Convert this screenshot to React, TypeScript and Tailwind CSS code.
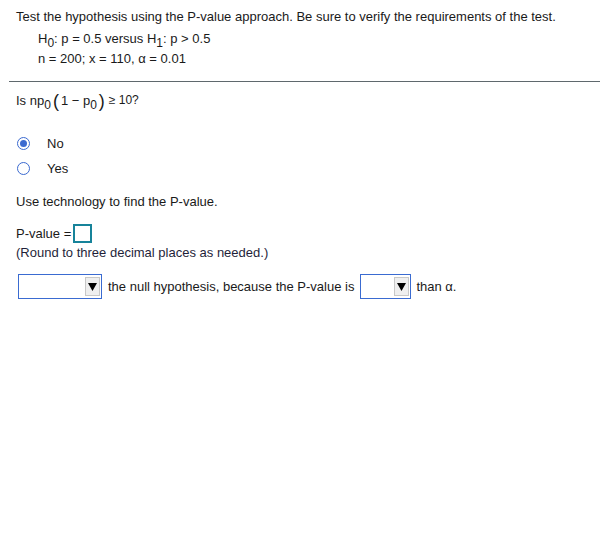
import React from 'react';

const Sub: React.FC<{ children: React.ReactNode }> = ({ children }) => (
  <span className="relative top-[4px] text-[12px] leading-none">{children}</span>
);

const Select: React.FC<{ width: string }> = ({ width }) => (
  <div className={`${width} h-[25px] border border-[#3a6bd1] bg-white flex items-center justify-end pr-[1px]`}>
    <div className="w-[15px] h-[19px] bg-[#efefef] border border-[#c8c8c8] flex items-center justify-center">
      <svg width="9" height="9" viewBox="0 0 9 9">
        <polygon points="0,1 9,1 4.5,9" fill="#000" />
      </svg>
    </div>
  </div>
);

const Radio: React.FC<{ checked?: boolean; label: string }> = ({ checked, label }) => (
  <div className="flex items-center h-[25px]">
    <div className="w-[13px] h-[13px] ml-[17px] rounded-full border border-[#3b6ad0] flex items-center justify-center bg-white">
      {checked && <div className="w-[7px] h-[7px] rounded-full bg-[#3b6ad0]" />}
    </div>
    <span className="ml-[17px]">{label}</span>
  </div>
);

export default function App() {
  return (
    <div
      className="w-[600px] h-[537px] bg-white text-[13px] text-[#1a1a1a] leading-none"
      style={{ fontFamily: '"Liberation Sans", Arial, sans-serif' }}
    >
      {/* Question header */}
      <div className="pl-[16px] pt-[10px]">
        <div className="h-[14px]">Test the hypothesis using the P-value approach. Be sure to verify the requirements of the test.</div>
        <div className="pl-[22px] mt-[8px] h-[14px]">
          H<Sub>0</Sub>: p = 0.5 versus H<Sub>1</Sub>: p &gt; 0.5
        </div>
        <div className="pl-[22px] mt-[6px] h-[14px]">n = 200; x = 110, α = 0.01</div>
      </div>

      <div className="ml-[9px] mt-[15px] h-px bg-[#5f686d]" />

      {/* Body */}
      <div className="pl-[16px]">
        <div className="mt-[8px] flex items-center h-[20px]">
          <span>Is np<Sub>0</Sub></span>
          <span className="text-[18px] mx-[2px] relative top-[1px]">(</span>
          <span>1 − p<Sub>0</Sub></span>
          <span className="text-[18px] mx-[2px] relative top-[1px]">)</span>
          <span className="ml-[2px] text-[12px]">≥ 10?</span>
        </div>

        <div className="mt-[21px] -ml-[16px]">
          <Radio checked label="No" />
          <Radio label="Yes" />
        </div>

        <div className="mt-[14px]">Use technology to find the P-value.</div>

        <div className="mt-[16px] flex items-center">
          <span>P-value =</span>
          <div className="ml-[2px] w-[19px] h-[19px] border-2 border-[#17839a] bg-white" />
        </div>
        <div className="mt-[3px] text-[#1f1f3a]">(Round to three decimal places as needed.)</div>

        <div className="mt-[15px] ml-[2px] flex items-center">
          <Select width="w-[84px]" />
          <span className="ml-[6px]">the null hypothesis, because the P-value is</span>
          <div className="ml-[6px]">
            <Select width="w-[51px]" />
          </div>
          <span className="ml-[5px]">than α.</span>
        </div>
      </div>
    </div>
  );
}
